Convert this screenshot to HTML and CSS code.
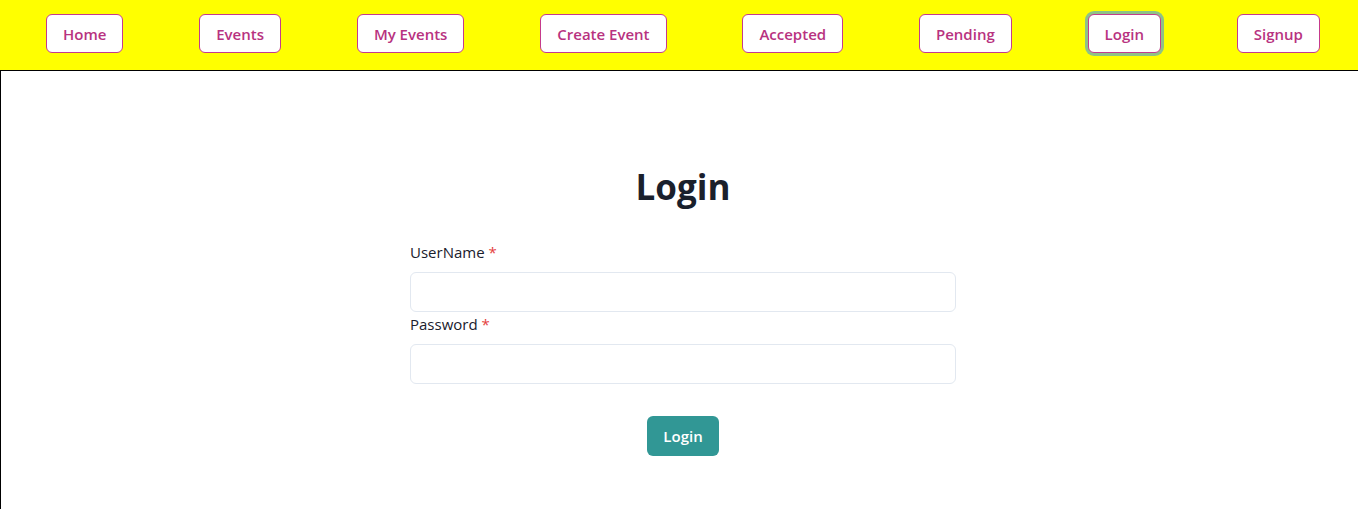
FILE: index.html
```html
<!DOCTYPE html>
<html lang="en">
<head>
    <meta charset="UTF-8">
    <meta name="viewport" content="width=device-width, initial-scale=1.0">
    <title>Login</title>
    <link rel="stylesheet" href="styles.css">
</head>
<body>
    <nav class="navbar">
        <button class="nav-btn">Home</button>
        <button class="nav-btn">Events</button>
        <button class="nav-btn">My Events</button>
        <button class="nav-btn">Create Event</button>
        <button class="nav-btn">Accepted</button>
        <button class="nav-btn">Pending</button>
        <button class="nav-btn focused">Login</button>
        <button class="nav-btn">Signup</button>
    </nav>

    <main class="content">
        <h1 class="title">Login</h1>
        <form class="login-form">
            <label class="field-label" for="username">UserName <span class="required">*</span></label>
            <input class="field-input" id="username" type="text">

            <label class="field-label" for="password">Password <span class="required">*</span></label>
            <input class="field-input" id="password" type="password">

            <div class="actions">
                <button type="button" class="submit-btn">Login</button>
            </div>
        </form>
    </main>
</body>
</html>
```

FILE: styles.css
```css
body {
    margin: 0;
    padding: 0;
    font-family: "Open Sans", "Noto Sans", sans-serif;
    background: white;
    color: #1a202c;
}

.navbar {
    height: 70px;
    box-sizing: border-box;
    background: #ffff00;
    display: flex;
    align-items: flex-start;
    justify-content: space-between;
    padding: 14px 38px 0 46px;
}

.nav-btn {
    height: 39px;
    padding: 0 16px;
    background: white;
    color: #b83280;
    border: 1px solid #c53a8c;
    border-radius: 6px;
    font-family: inherit;
    font-size: 15px;
    font-weight: 600;
    cursor: pointer;
}

.nav-btn.focused {
    box-shadow: 0 0 0 3px rgba(66, 153, 225, 0.6);
}

.content {
    border-top: 1px solid black;
    border-left: 1px solid black;
    min-height: 439px;
    padding-top: 95px;
    padding-left: 7px;
    box-sizing: border-box;
}

.title {
    margin: 0 0 32px;
    text-align: center;
    font-size: 35px;
    font-weight: 700;
    line-height: 1.2;
}

.login-form {
    width: 546px;
    margin: 0 auto;
    display: flex;
    flex-direction: column;
}

.field-label {
    font-size: 15px;
    font-weight: 500;
    line-height: 24px;
    margin-bottom: 8px;
}

.required {
    color: #e53e3e;
}

.field-input {
    height: 40px;
    box-sizing: border-box;
    border: 1px solid #e2e8f0;
    border-radius: 6px;
    padding: 0 16px;
    font-family: inherit;
    font-size: 16px;
    outline: none;
}

.actions {
    display: flex;
    justify-content: center;
    margin-top: 32px;
}

.submit-btn {
    height: 40px;
    padding: 0 16px;
    background: #319795;
    color: white;
    border: none;
    border-radius: 6px;
    font-family: inherit;
    font-size: 15px;
    font-weight: 600;
    cursor: pointer;
}
```
